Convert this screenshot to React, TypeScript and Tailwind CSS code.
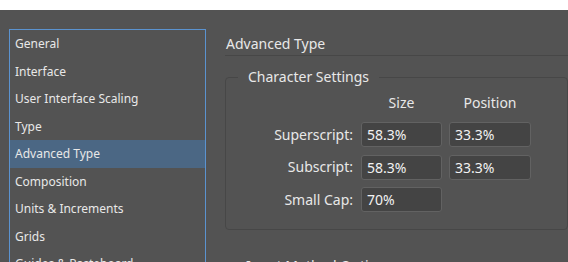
import React from "react";

const sections = [
  "General",
  "Interface",
  "User Interface Scaling",
  "Type",
  "Advanced Type",
  "Composition",
  "Units & Increments",
  "Grids",
  "Guides & Pasteboard",
];

const rows = [
  { label: "Superscript:", size: "58.3%", position: "33.3%" },
  { label: "Subscript:", size: "58.3%", position: "33.3%" },
  { label: "Small Cap:", size: "70%", position: null },
];

function Field({ value }: { value: string }) {
  return (
    <div className="h-[25px] rounded-[3px] border border-[#626262] bg-[#444444] pl-[5px] text-[14px] leading-[23px] text-[#f2f2f2]">
      {value}
    </div>
  );
}

export default function App() {
  const selected = "Advanced Type";

  return (
    <div
      className="flex h-[262px] w-[568px] flex-col overflow-hidden bg-[#535353] text-[#e8e8e8]"
      style={{ fontFamily: '"Noto Sans", "Liberation Sans", sans-serif' }}
    >
      <div className="h-[10px] shrink-0 bg-white" />

      <div className="flex flex-1 pl-[9px] pt-[19px]">
        {/* preference sections */}
        <div className="w-[197px] shrink-0 border border-b-0 border-[#5b93d0]">
          {sections.map((s) => (
            <div
              key={s}
              className={`h-[27.5px] pl-[5px] text-[12px] leading-[27.5px] ${
                s === selected ? "bg-[#4b6784]" : ""
              }`}
            >
              {s}
            </div>
          ))}
        </div>

        {/* settings pane */}
        <div className="ml-[19px] flex-1">
          <div className="h-[27px] border-b border-[#474747] pl-[1px] pt-[5px] text-[14px] leading-[20px]">
            Advanced Type
          </div>

          <fieldset className="mt-[11px] rounded-[4px] border border-[#474747] pb-[17px]">
            <legend className="ml-[12px] px-[10px] text-[14px] leading-[20px]">
              Character Settings
            </legend>

            <div className="grid grid-cols-[128px_81px_82px] gap-x-[7px] pt-[6px]">
              <div />
              <div className="text-center text-[14px] leading-[20px]">Size</div>
              <div className="text-center text-[14px] leading-[20px]">Position</div>
            </div>

            <div className="mt-[9px] flex flex-col gap-[7.5px]">
              {rows.map((r) => (
                <div
                  key={r.label}
                  className="grid grid-cols-[128px_81px_82px] items-center gap-x-[7px]"
                >
                  <div className="pr-[1px] text-right text-[14px] leading-[20px]">
                    {r.label}
                  </div>
                  <Field value={r.size} />
                  {r.position ? <Field value={r.position} /> : <div />}
                </div>
              ))}
            </div>
          </fieldset>

          <div className="mt-[26px] pl-[21px] text-[14px] leading-[20px]">
            Input Method Options
          </div>
        </div>
      </div>
    </div>
  );
}
